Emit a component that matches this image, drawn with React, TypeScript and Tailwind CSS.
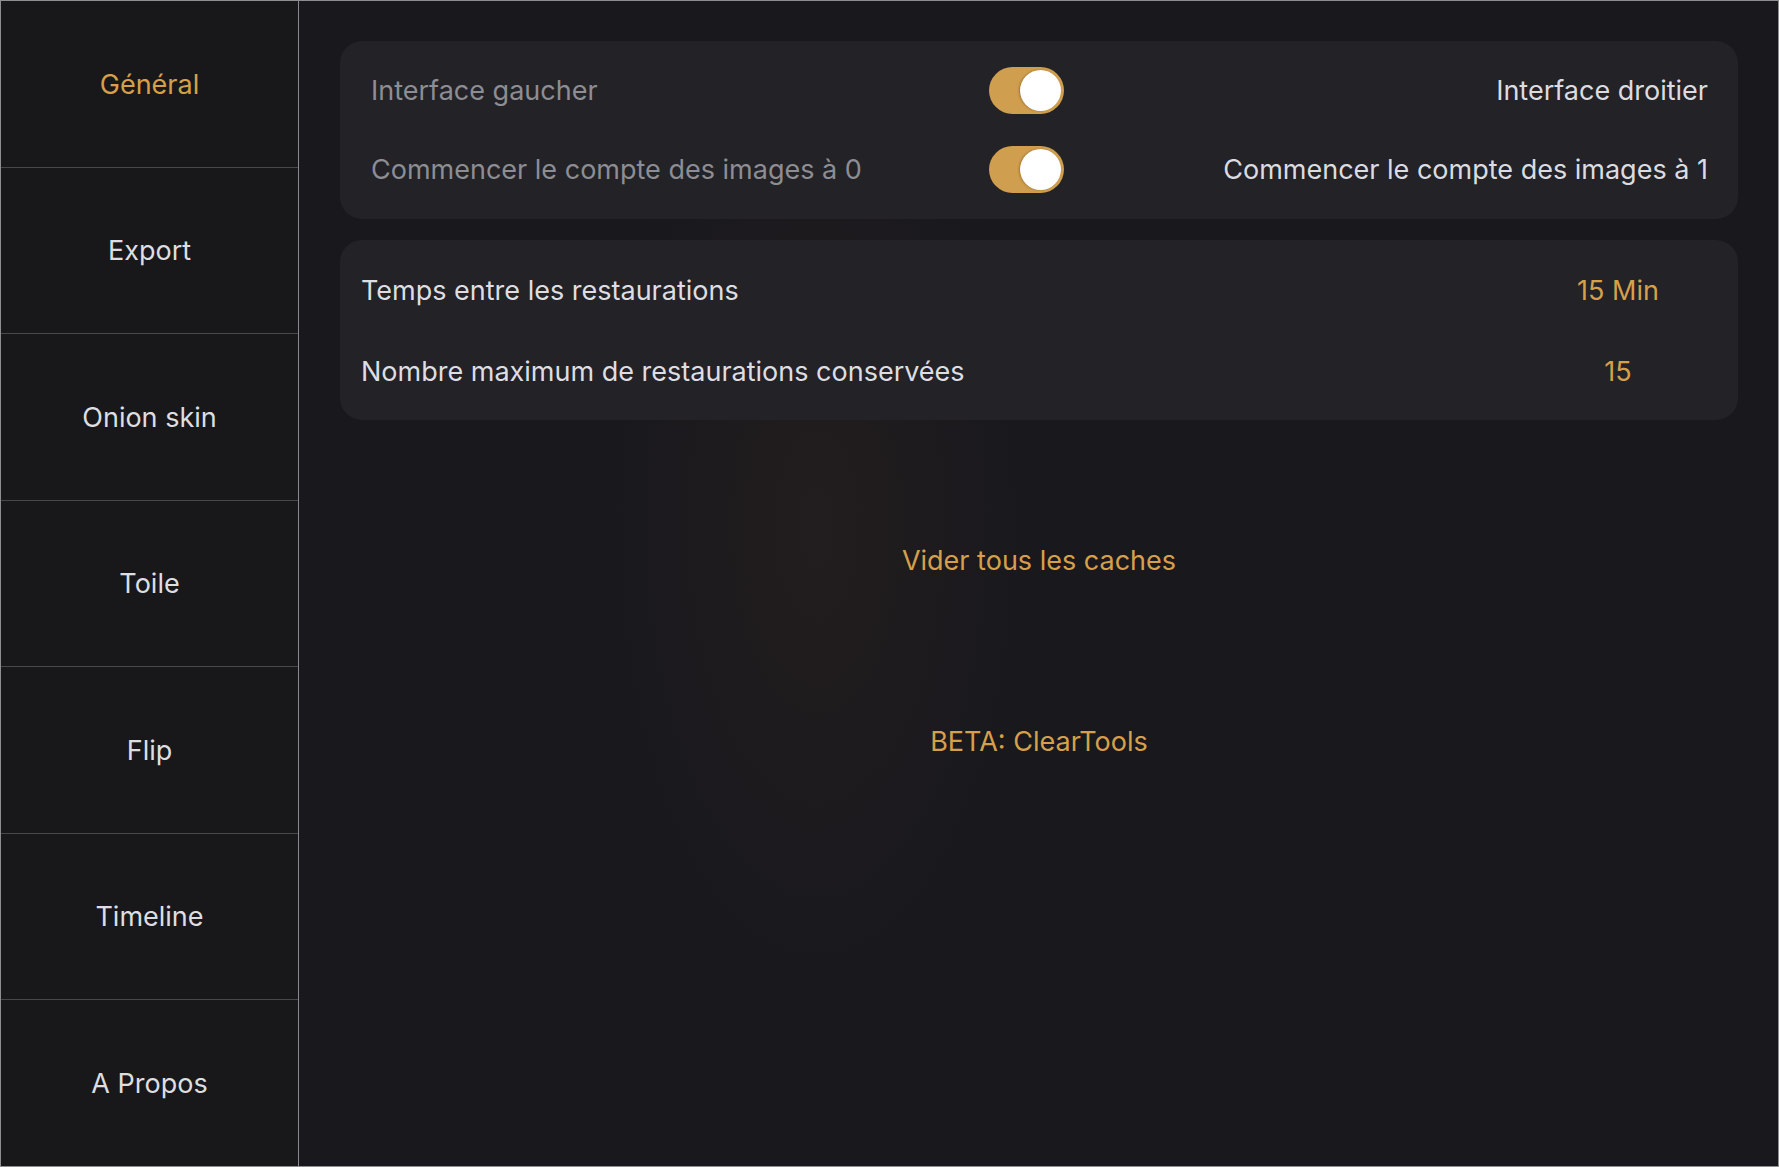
import React from 'react';

const sections = ['Général', 'Export', 'Onion skin', 'Toile', 'Flip', 'Timeline', 'A Propos'];

const Toggle: React.FC<{ on: boolean }> = ({ on }) => (
  <div
    className={`w-[75px] h-[47px] rounded-full p-[3px] flex items-center ${
      on ? 'justify-end bg-[#cf9e4e]' : 'justify-start bg-[#3a3a3e]'
    }`}
  >
    <div className="w-[41px] h-[41px] rounded-full bg-white shadow-[-1px_0_2px_rgba(120,80,20,0.5)]" />
  </div>
);

const ToggleRow: React.FC<{ left: string; right: string }> = ({ left, right }) => (
  <div className="h-[79px] grid grid-cols-[618px_75px_1fr] items-center">
    <span className="text-[#8d8d93] pt-[2px]">{left}</span>
    <Toggle on />
    <span className="text-right text-[#dcdce0] pt-[2px]">{right}</span>
  </div>
);

const ValueRow: React.FC<{ label: string; value: string }> = ({ label, value }) => (
  <div className="h-[81px] flex items-center pt-[3px]">
    <span className="flex-1 text-[#dedee2]">{label}</span>
    <span className="w-[160px] text-center text-[#d6a04a]">{value}</span>
  </div>
);

export default function App() {
  return (
    <div
      className="w-[1779px] h-[1167px] flex border border-[#8e8e90] bg-[#18181c] overflow-hidden text-[27px]"
      style={{ fontFamily: 'Inter, "Noto Sans", sans-serif' }}
    >
      <aside className="w-[298px] shrink-0 flex flex-col border-r border-[#8a8a8e] bg-[#18181b]">
        {sections.map((s, i) => (
          <div
            key={s}
            className={`flex-1 flex items-center justify-center pt-[2px] ${
              i < sections.length - 1 ? 'border-b border-[#48484c]' : ''
            } ${i === 0 ? 'text-[#d6a04a]' : 'text-[#dedee0]'}`}
          >
            {s}
          </div>
        ))}
      </aside>

      <main className="flex-1 flex flex-col pl-[41px] pr-[40px] pt-[40px] bg-[#18181d] bg-[radial-gradient(ellipse_320px_700px_at_35%_45%,rgba(70,48,32,0.22),transparent_70%)]">
        <section className="rounded-[22px] bg-[#222227] pl-[31px] pr-[30px] py-[10px]">
          <ToggleRow left="Interface gaucher" right="Interface droitier" />
          <ToggleRow left="Commencer le compte des images à 0" right="Commencer le compte des images à 1" />
        </section>

        <section className="mt-[21px] rounded-[22px] bg-[#222227] pl-[21px] pr-[40px] py-[9px]">
          <ValueRow label="Temps entre les restaurations" value="15 Min" />
          <ValueRow label="Nombre maximum de restaurations conservées" value="15" />
        </section>

        <div className="mt-[121px] flex flex-col items-center gap-[141px] text-[#d6a04a]">
          <button className="h-[40px]">Vider tous les caches</button>
          <button className="h-[40px]">BETA: ClearTools</button>
        </div>
      </main>
    </div>
  );
}
